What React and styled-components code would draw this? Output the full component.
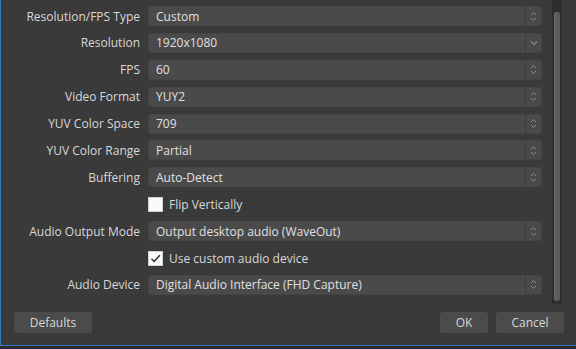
import styled, { createGlobalStyle } from "styled-components";

const GlobalStyle = createGlobalStyle`
  html, body { margin: 0; padding: 0; background: #2b2b2b; }
  body { font-family: "Open Sans", "Noto Sans", sans-serif; }
`;

const rows = [
  { type: "combo", label: "Resolution/FPS Type", value: "Custom" },
  { type: "edit", label: "Resolution", value: "1920x1080" },
  { type: "combo", label: "FPS", value: "60" },
  { type: "combo", label: "Video Format", value: "YUY2" },
  { type: "combo", label: "YUV Color Space", value: "709" },
  { type: "combo", label: "YUV Color Range", value: "Partial" },
  { type: "combo", label: "Buffering", value: "Auto-Detect" },
  { type: "check", label: "Flip Vertically", checked: false },
  { type: "combo", label: "Audio Output Mode", value: "Output desktop audio (WaveOut)" },
  { type: "check", label: "Use custom audio device", checked: true },
  { type: "combo", label: "Audio Device", value: "Digital Audio Interface (FHD Capture)" },
];

const UpDown = () => (
  <svg width="7" height="11" viewBox="0 0 7 11" fill="none" stroke="#8c8c8c" strokeWidth="1">
    <path d="M1 4 L3.5 1.5 L6 4" />
    <path d="M1 7 L3.5 9.5 L6 7" />
  </svg>
);

const Down = () => (
  <svg width="8" height="6" viewBox="0 0 8 6" fill="none" stroke="#8c8c8c" strokeWidth="1.1">
    <path d="M1 1.5 L4 4.5 L7 1.5" />
  </svg>
);

const Check = () => (
  <svg width="13" height="13" viewBox="0 0 13 13" fill="none" stroke="#2a2a2a" strokeWidth="1.4">
    <path d="M2.5 6.8 L5.2 9.5 L10.8 3.2" />
  </svg>
);

export default function App() {
  return (
    <>
      <GlobalStyle />
      <Frame>
        <Body>
          <Form>
            {rows.map((r) =>
              r.type === "check" ? (
                <Field key={r.label}>
                  <CheckRow>
                    <Box>{r.checked && <Check />}</Box>
                    <CheckLabel>{r.label}</CheckLabel>
                  </CheckRow>
                </Field>
              ) : (
                <Row key={r.label}>
                  <Label>{r.label}</Label>
                  <Combo>
                    <ComboText>{r.value}</ComboText>
                    <Arrow>{r.type === "edit" ? <Down /> : <UpDown />}</Arrow>
                  </Combo>
                </Row>
              )
            )}
          </Form>
          <Track>
            <Handle />
          </Track>
        </Body>
        <Footer>
          <Button $w={78}>Defaults</Button>
          <Spacer />
          <Button $w={48}>OK</Button>
          <Button $w={68}>Cancel</Button>
        </Footer>
      </Frame>
    </>
  );
}

const Frame = styled.div`
  width: 575px;
  height: 345px;
  background: #3a3a3a;
  border-left: 1px solid #2f7cc3;
  border-bottom: 1px solid #2f7cc3;
  display: flex;
  flex-direction: column;
`;

const Body = styled.div`
  height: 304px;
  display: flex;
`;

const Form = styled.div`
  width: 551px;
  padding: 6px 0 0 0;
  display: flex;
  flex-direction: column;
  gap: 6.9px;
`;

const Row = styled.div`
  display: flex;
  align-items: center;
  height: 20px;
`;

const Field = styled.div`
  display: flex;
  align-items: center;
  height: 20px;
  padding-left: 147px;
`;

const Label = styled.div`
  width: 139px;
  margin-right: 8px;
  text-align: right;
  color: #d8d8d8;
  font-size: 12px;
  white-space: nowrap;
`;

const Combo = styled.div`
  width: 394px;
  height: 20px;
  box-sizing: border-box;
  background: #4a4a4a;
  border: 1px solid #454545;
  border-radius: 3px;
  display: flex;
  align-items: center;
`;

const ComboText = styled.div`
  flex: 1;
  padding-left: 7px;
  color: #e0e0e0;
  font-size: 12px;
  white-space: nowrap;
  overflow: hidden;
`;

const Arrow = styled.div`
  width: 15px;
  height: 100%;
  border-left: 1px solid #3c3c3c;
  display: flex;
  align-items: center;
  justify-content: center;
`;

const CheckRow = styled.div`
  display: flex;
  align-items: center;
  gap: 6px;
`;

const Box = styled.div`
  width: 15px;
  height: 15px;
  box-sizing: border-box;
  background: #fafafa;
  border: 1px solid #d0d0d0;
  display: flex;
  align-items: center;
  justify-content: center;
`;

const CheckLabel = styled.span`
  color: #d8d8d8;
  font-size: 12px;
`;

const Track = styled.div`
  width: 10px;
  background: #2e2e2e;
  padding: 12px 2px 3px 2px;
  box-sizing: border-box;
  display: flex;
`;

const Handle = styled.div`
  flex: 1;
  background: #5d5d5d;
  border-radius: 3px;
  box-shadow: inset 1px 0 0 #6a6a6a;
`;

const Footer = styled.div`
  display: flex;
  align-items: center;
  gap: 8px;
  padding: 8px 12px 0 13px;
`;

const Spacer = styled.div`
  flex: 1;
`;

const Button = styled.div`
  width: ${(p) => p.$w}px;
  height: 21px;
  background: #4b4b4b;
  border-radius: 3px;
  color: #d8d8d8;
  font-size: 12px;
  display: flex;
  align-items: center;
  justify-content: center;
`;
